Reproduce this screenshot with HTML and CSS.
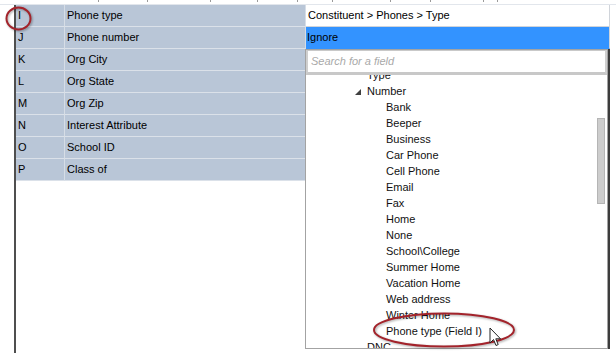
FILE: index.html
```html
<!DOCTYPE html>
<html>
<head>
<meta charset="utf-8">
<link rel="stylesheet" href="styles.css">
</head>
<body>
<div class="page">
  <div class="top-strip">
    <span class="tick" style="margin-left:98px"></span>
    <span class="tick" style="margin-left:48px"></span>
    <span class="tick" style="margin-left:62px"></span>
    <span class="tick" style="margin-left:46px"></span>
    <span class="tick" style="margin-left:39px"></span>
    <span class="tick" style="margin-left:34px"></span>
    <span class="tick" style="margin-left:57px"></span>
    <span class="tick" style="margin-left:39px"></span>
    <span class="tick" style="margin-left:52px"></span>
    <span class="tick" style="margin-left:13px"></span>
  </div>
  <div class="main">
    <div class="gutter"></div>
    <div class="grid">
      <div class="row"><div class="cell letter">I</div><div class="cell name">Phone type</div><div class="cell map map-value">Constituent &gt; Phones &gt; Type</div></div>
      <div class="row"><div class="cell letter">J</div><div class="cell name">Phone number</div><div class="cell map map-selected">Ignore</div></div>
      <div class="row"><div class="cell letter">K</div><div class="cell name">Org City</div><div class="cell map"></div></div>
      <div class="row"><div class="cell letter">L</div><div class="cell name">Org State</div><div class="cell map"></div></div>
      <div class="row"><div class="cell letter">M</div><div class="cell name">Org Zip</div><div class="cell map"></div></div>
      <div class="row"><div class="cell letter">N</div><div class="cell name">Interest Attribute</div><div class="cell map"></div></div>
      <div class="row"><div class="cell letter">O</div><div class="cell name">School ID</div><div class="cell map"></div></div>
      <div class="row"><div class="cell letter">P</div><div class="cell name">Class of</div><div class="cell map"></div></div>
    </div>
  </div>

  <div class="dropdown">
    <div class="search">Search for a field</div>
    <div class="tree-area">
      <div class="tree">
        <div class="item lvl1 first">Type</div>
        <div class="item lvl0"><span class="tri"></span>Number</div>
        <div class="item lvl2">Bank</div>
        <div class="item lvl2">Beeper</div>
        <div class="item lvl2">Business</div>
        <div class="item lvl2">Car Phone</div>
        <div class="item lvl2">Cell Phone</div>
        <div class="item lvl2">Email</div>
        <div class="item lvl2">Fax</div>
        <div class="item lvl2">Home</div>
        <div class="item lvl2">None</div>
        <div class="item lvl2">School\College</div>
        <div class="item lvl2">Summer Home</div>
        <div class="item lvl2">Vacation Home</div>
        <div class="item lvl2">Web address</div>
        <div class="item lvl2">Winter Home</div>
        <div class="item lvl2">Phone type (Field I)</div>
        <div class="item lvl1">DNC</div>
      </div>
      <div class="scrollbar"><div class="thumb"></div></div>
    </div>
  </div>

  <svg class="marks" width="616" height="353" viewBox="0 0 616 353">
    <ellipse cx="18.5" cy="18.5" rx="12" ry="11" class="ring"/>
    <ellipse cx="444" cy="330" rx="70" ry="16.5" class="ring"/>
  </svg>
  <svg class="cursor" width="14" height="21" viewBox="0 0 14 21">
    <path d="M1 1 L1 16 L4.5 12.5 L7 18.5 L9.2 17.6 L6.8 11.8 L11.5 11.8 Z" fill="#fff" stroke="#222" stroke-width="1" stroke-linejoin="round"/>
  </svg>
</div>
</body>
</html>
```

FILE: styles.css
```css
* { box-sizing: border-box; }
html, body { margin: 0; padding: 0; background: #fff; }
body {
  font-family: "Liberation Sans", Arial, sans-serif;
  font-size: 11px;
  color: #000;
}
.page {
  position: relative;
  width: 616px;
  height: 353px;
  overflow: hidden;
  display: flex;
  flex-direction: column;
}
.top-strip {
  height: 5px;
  display: flex;
  align-items: flex-start;
  border-bottom: 1px solid #e2e6ec;
}
.tick {
  display: block;
  width: 1px;
  height: 2px;
  background: #9a9a9a;
}
.main {
  flex: 1;
  display: flex;
}
.gutter { width: 14px; }
.grid {
  width: 596px;
  border-left: 2px solid #4f4f4f;
  display: flex;
  flex-direction: column;
}
.row {
  display: grid;
  grid-template-columns: 49px 241px 304px;
  height: 22px;
}
.cell {
  line-height: 21px;
  white-space: nowrap;
  overflow: hidden;
  border-bottom: 1px solid #dbe1e9;
  border-right: 1px solid #d6dde6;
  padding-left: 2px;
  background: #b9c6d7;
}
.map { background: #fff; border-right: 1px solid #d0d4da; border-bottom: 1px solid #d0d4da; }
.map-selected { background: #3393ff; border-bottom-color: #3393ff; padding-left: 1px; }

.dropdown {
  position: absolute;
  left: 305px;
  top: 49px;
  width: 303px;
  height: 300px;
  background: #fff;
  border: 1px solid #a3a3a3;
  box-shadow: 2px 0 0 #3c3c3c;
  display: flex;
  flex-direction: column;
}
.search {
  height: 25px;
  border-top: 1px solid #c9c9c9;
  border-left: 2px solid #cfcfcf;
  border-right: 2px solid #cfcfcf;
  border-bottom: 3px solid #c8c8c8;
  padding-left: 3px;
  line-height: 20px;
  font-style: italic;
  color: #a9a9a9;
}
.tree-area {
  flex: 1;
  display: flex;
  overflow: hidden;
}
.tree { flex: 1; }
.item {
  height: 16px;
  line-height: 16px;
  white-space: nowrap;
  color: #111;
}
.first { margin-top: -8px; }
.lvl0 { padding-left: 49px; }
.lvl1 { padding-left: 61px; }
.lvl2 { padding-left: 80px; }
.tri {
  display: inline-block;
  width: 0;
  height: 0;
  border-left: 6px solid transparent;
  border-bottom: 6px solid #404040;
  margin-right: 6px;
  vertical-align: 0;
}
.scrollbar {
  width: 10px;
  padding-top: 43px;
  padding-right: 2px;
}
.thumb {
  width: 8px;
  height: 86px;
  background: #cdcdcd;
  border: 1px solid #b5b5b5;
}
.marks {
  position: absolute;
  left: 0;
  top: 0;
  pointer-events: none;
}
.ring {
  fill: none;
  stroke: #a3232b;
  stroke-width: 2;
  filter: drop-shadow(1px 1px 1px rgba(0,0,0,0.35));
}
.cursor {
  position: absolute;
  left: 489px;
  top: 327px;
}
```
